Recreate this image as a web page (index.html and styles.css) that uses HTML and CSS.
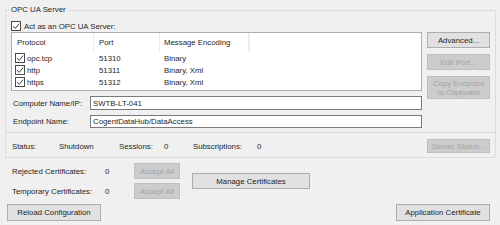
FILE: index.html
```html
<!DOCTYPE html>
<html>
<head>
<meta charset="utf-8">
<link rel="stylesheet" href="styles.css">
</head>
<body>
<div class="group">
  <span class="group-title">OPC UA Server</span>
  <div class="act">
    <span class="cb"><svg viewBox="0 0 10 10" width="10" height="10"><polyline points="2,5.2 4.2,7.4 8.2,2.6" /></svg></span>
    <span class="act-label">Act as an OPC UA Server:</span>
  </div>
  <div class="main">
    <div class="left">
      <div class="list">
        <div class="lrow head">
          <span class="c1">Protocol</span><span class="c2">Port</span><span class="c3">Message Encoding</span><span class="c4"></span>
        </div>
        <div class="lrow item">
          <span class="c1"><span class="cb small"><svg viewBox="0 0 10 10" width="10" height="10"><polyline points="2,5.2 4.2,7.4 8.2,2.6" /></svg></span>opc.tcp</span><span class="c2">51310</span><span class="c3">Binary</span>
        </div>
        <div class="lrow item">
          <span class="c1"><span class="cb small"><svg viewBox="0 0 10 10" width="10" height="10"><polyline points="2,5.2 4.2,7.4 8.2,2.6" /></svg></span>http</span><span class="c2">51311</span><span class="c3">Binary, Xml</span>
        </div>
        <div class="lrow item">
          <span class="c1"><span class="cb small"><svg viewBox="0 0 10 10" width="10" height="10"><polyline points="2,5.2 4.2,7.4 8.2,2.6" /></svg></span>https</span><span class="c2">51312</span><span class="c3">Binary, Xml</span>
        </div>
      </div>
      <div class="field f1">
        <span class="flabel">Computer Name/IP:</span>
        <span class="tbox">SWTB-LT-041</span>
      </div>
      <div class="field f2">
        <span class="flabel">Endpoint Name:</span>
        <span class="tbox">CogentDataHub/DataAccess</span>
      </div>
    </div>
    <div class="right">
      <button class="btn b-adv">Advanced...</button>
      <button class="btn dis b-edit">Edit Port...</button>
      <button class="btn dis b-copy">Copy Endpoint<br>to Clipboard</button>
    </div>
  </div>
  <div class="sep"></div>
  <div class="status">
    <span class="s-lbl">Status:</span>
    <span class="s-val">Shutdown</span>
    <span class="s-ses">Sessions:</span>
    <span class="s-sesv">0</span>
    <span class="s-sub">Subscriptions:</span>
    <span class="s-subv">0</span>
    <button class="btn dis b-srv">Server Status...</button>
  </div>
</div>
<div class="certs">
  <div class="cert-grid">
    <span class="cl">Rejected Certificates:</span><span class="cv">0</span><button class="btn dis b-acc">Accept All</button>
    <span class="cl">Temporary Certificates:</span><span class="cv">0</span><button class="btn dis b-acc">Accept All</button>
  </div>
  <button class="btn b-man">Manage Certificates</button>
</div>
<div class="bottom">
  <button class="btn b-wide">Reload Configuration</button>
  <button class="btn b-wide">Application Certificate</button>
</div>
</body>
</html>
```
FILE: styles.css
```css
* { box-sizing: border-box; }
html, body {
  margin: 0;
  padding: 0;
  background: #f0f0f0;
  width: 500px;
  height: 225px;
  overflow: hidden;
  font-family: "Liberation Sans", Arial, sans-serif;
  font-size: 7.8px;
  color: #1e1e1e;
}
.group {
  position: relative;
  margin: 10px 4px 0 5px;
  height: 148px;
  border: 1px solid #dcdcdc;
}
.group-title {
  position: absolute;
  top: -6px;
  left: 4px;
  padding: 0 1px;
  background: #f0f0f0;
  line-height: 10px;
}
.act {
  display: flex;
  align-items: center;
  height: 10px;
  margin-top: 10px;
  padding-left: 5px;
}
.cb {
  display: inline-block;
  width: 10px;
  height: 10px;
  border: 1px solid #4a4a4a;
  background: #fff;
  position: relative;
  flex: none;
}
.cb svg {
  position: absolute;
  left: -1px;
  top: -1px;
}
.cb polyline {
  fill: none;
  stroke: #3a3a3a;
  stroke-width: 1;
}
.act-label { margin-left: 3px; }
.main {
  display: flex;
  margin-top: 1px;
  padding-left: 5px;
}
.left { width: 411px; }
.right {
  margin-left: 5px;
  width: 63px;
  display: flex;
  flex-direction: column;
  gap: 6px;
}
.list {
  height: 59px;
  background: #fff;
  border: 1px solid #adadad;
}
.lrow {
  display: flex;
  align-items: center;
}
.lrow.head {
  height: 19px;
}
.lrow.head span {
  height: 19px;
  display: flex;
  align-items: center;
  border-right: 1px solid #ececec;
}
.lrow.item { height: 12px; }
.c1 { width: 82px; padding-left: 5px; display: flex; align-items: center; }
.c2 { width: 66px; padding-left: 5px; }
.c3 { width: 89px; padding-left: 4px; }
.lrow.item .c1 { padding-left: 3px; }
.cb.small { margin-right: 2px; }
.field {
  display: flex;
  align-items: center;
}
.f1 { margin-top: 5px; height: 14px; }
.f2 { margin-top: 5px; height: 13px; }
.flabel {
  width: 79px;
  padding-left: 2px;
}
.tbox {
  flex: 1;
  height: 100%;
  background: #fff;
  border: 1px solid #7a7a7a;
  display: flex;
  align-items: center;
  padding-left: 2px;
}
.btn {
  font-family: inherit;
  font-size: 7.8px;
  color: #1e1e1e;
  background: #e1e1e1;
  border: 1px solid #adadad;
  padding: 0;
  margin: 0;
  line-height: 9px;
}
.btn.dis {
  background: #cccccc;
  border-color: #bfbfbf;
  color: #a3a3a3;
}
.b-adv, .b-edit { height: 16px; }
.b-copy { height: 23px; }
.sep {
  height: 1px;
  background: #d7d7d7;
  margin-top: 4px;
}
.status {
  display: flex;
  align-items: center;
  height: 14px;
  margin-top: 6px;
  padding-left: 6px;
  padding-right: 5px;
}
.s-lbl { width: 47px; }
.s-val { width: 60px; }
.s-ses { width: 45px; }
.s-sesv { width: 29px; }
.s-sub { width: 64px; }
.s-subv { flex: 1; }
.b-srv { width: 63px; height: 14px; }
.certs {
  display: flex;
  align-items: center;
  margin-top: 5px;
  padding-left: 12px;
}
.cert-grid {
  display: grid;
  grid-template-columns: 93px 29px 46px;
  grid-auto-rows: 16px;
  row-gap: 4px;
  align-items: center;
}
.b-acc { height: 16px; width: 46px; }
.b-man {
  margin-left: 12px;
  width: 118px;
  height: 16px;
}
.bottom {
  display: flex;
  justify-content: space-between;
  margin-top: 5px;
  padding: 0 10px 0 7px;
}
.b-wide { width: 94px; height: 17px; }
```
